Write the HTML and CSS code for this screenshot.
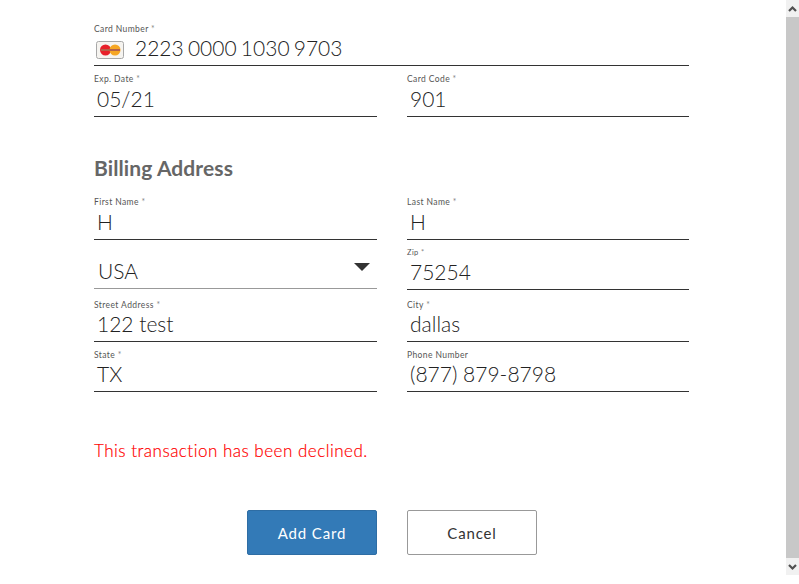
FILE: index.html
```html
<!DOCTYPE html>
<html lang="en">
<head>
<meta charset="utf-8">
<title>Add Card</title>
<link rel="stylesheet" href="styles.css">
</head>
<body>
<div class="page">
  <main class="content">
    <form class="form">
      <div class="field field-card">
        <span class="label">Card Number <i>*</i></span>
        <div class="value value-card">
          <svg class="card-icon" width="28" height="18" viewBox="0 0 28 18" aria-hidden="true">
            <rect x="0.5" y="0.5" width="27" height="17" rx="2" fill="#f6f4f0" stroke="#a8a8a8"/>
            <circle cx="9.5" cy="9" r="5.5" fill="#e8202a"/>
            <circle cx="19" cy="9" r="5.5" fill="#f6a623"/>
            <rect x="5" y="8" width="19" height="2" fill="#b4614a"/>
          </svg>
          <span class="card-number">2223 0000 1030 9703</span>
        </div>
      </div>
      <div class="row row-gap">
        <div class="field field-tall">
          <span class="label">Exp. Date <i>*</i></span>
          <div class="value">05/21</div>
        </div>
        <div class="field field-tall">
          <span class="label">Card Code <i>*</i></span>
          <div class="value">901</div>
        </div>
      </div>

      <h2 class="section-title">Billing Address</h2>

      <div class="row">
        <div class="field field-tall">
          <span class="label">First Name <i>*</i></span>
          <div class="value">H</div>
        </div>
        <div class="field field-tall">
          <span class="label">Last Name <i>*</i></span>
          <div class="value">H</div>
        </div>
      </div>
      <div class="row row-gap">
        <div class="select">
          <span>USA</span>
          <span class="caret"></span>
        </div>
        <div class="field">
          <span class="label label-small">Zip <i>*</i></span>
          <div class="value value-tight">75254</div>
        </div>
      </div>
      <div class="row row-gap-wide">
        <div class="field">
          <span class="label">Street Address <i>*</i></span>
          <div class="value value-tight">122 test</div>
        </div>
        <div class="field">
          <span class="label">City <i>*</i></span>
          <div class="value value-tight">dallas</div>
        </div>
      </div>
      <div class="row row-gap">
        <div class="field">
          <span class="label">State <i>*</i></span>
          <div class="value value-tight">TX</div>
        </div>
        <div class="field">
          <span class="label">Phone Number</span>
          <div class="value value-tight">(877) 879-8798</div>
        </div>
      </div>

      <p class="error">This transaction has been declined.</p>

      <div class="actions">
        <button type="button" class="btn btn-primary">Add Card</button>
        <button type="button" class="btn btn-secondary">Cancel</button>
      </div>
    </form>
  </main>
  <aside class="scrollbar" aria-hidden="true">
    <div class="scroll-btn">
      <svg width="13" height="10" viewBox="0 0 13 10"><path d="M3 7 L6.5 3.5 L10 7" fill="none" stroke="#505050" stroke-width="2.2"/></svg>
    </div>
    <div class="scroll-thumb"></div>
    <div class="scroll-btn">
      <svg width="13" height="10" viewBox="0 0 13 10"><path d="M3 3 L6.5 6.5 L10 3" fill="none" stroke="#505050" stroke-width="2.2"/></svg>
    </div>
  </aside>
</div>
</body>
</html>
```
FILE: styles.css
```css
* { box-sizing: border-box; }
html, body { margin: 0; padding: 0; height: 100%; overflow: hidden; background: #fff; }
body { font-family: "Lato", "Liberation Sans", sans-serif; color: #333; }
.page { display: flex; align-items: flex-start; width: 799px; height: 584px; }
.content { flex: 1; padding: 23px 0 0 94px; }
.form { width: 595px; }
.row { display: grid; grid-template-columns: 283px 282px; column-gap: 30px; align-items: start; }
.row-gap { margin-top: 7px; }
.row-gap-wide { margin-top: 9px; }
.field { display: flex; flex-direction: column; height: 43px; border-bottom: 1px solid #333; }
.field-tall { height: 44px; }
.label { font-size: 8.5px; line-height: 12px; height: 12px; color: #555; letter-spacing: 0.4px; }
.label i { font-style: normal; color: #888; }
.label-small { font-size: 7.5px; }
.value { font-size: 21px; font-weight: 300; line-height: 26px; padding-left: 3px; color: #222; margin-top: 1px; }
.value-tight { margin-top: 0; }
.value-card { display: flex; align-items: center; gap: 11px; padding-left: 2px; margin-top: 0; height: 26px; }
.card-number { word-spacing: -1.5px; }
.card-icon { flex: none; margin-top: 3px; }
.section-title { margin: 38px 0 15px; font-size: 21px; line-height: 26px; font-weight: 700; color: #666; letter-spacing: 0.1px; }
.select { display: flex; align-items: center; justify-content: space-between; height: 42px; padding: 5px 7px 0 4px; border-bottom: 1px solid #999; font-size: 21px; font-weight: 300; color: #222; }
.caret { width: 0; height: 0; border-left: 8px solid transparent; border-right: 8px solid transparent; border-top: 8px solid #333; margin-top: -6px; }
.error { margin: 48px 0 0; font-size: 17px; line-height: 22px; font-weight: 300; color: #f00; letter-spacing: 0.5px; -webkit-text-stroke: 0.2px #f00; }
.actions { display: flex; gap: 30px; margin: 48px 0 0 153px; }
.btn { width: 130px; height: 45px; border-radius: 2px; font: 400 15px "Lato", sans-serif; letter-spacing: 0.85px; padding: 0; }
.btn-primary { background: #337ab7; border: 1px solid #2e6da4; color: #fff; }
.btn-secondary { background: #fff; border: 1px solid #999; color: #333; }
.scrollbar { display: flex; flex-direction: column; flex: none; width: 13px; height: 575px; background: #f1f1f1; }
.scroll-btn { flex: none; height: 17px; display: flex; align-items: center; justify-content: center; }
.scroll-thumb { flex: 1; background: #c8c8c8; }
```
